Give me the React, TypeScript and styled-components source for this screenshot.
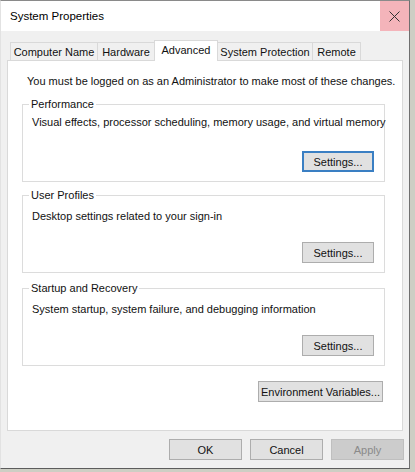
import React from "react";
import styled, { createGlobalStyle, css } from "styled-components";

const GlobalStyle = createGlobalStyle`
  html, body { margin: 0; padding: 0; background: #cfd0c8; }
  body {
    font-family: "Liberation Sans", Arial, sans-serif;
    font-size: 11px;
    color: #111;
  }
  * { box-sizing: border-box; }
`;

const Screen = styled.div`
  width: 415px;
  height: 472px;
  background: #cdcec4;
  overflow: hidden;
`;

const Window = styled.div`
  width: 410px;
  height: 469px;
  background: #f0f0f0;
  border-top: 1px solid #8a8a8a;
  border-right: 1px solid #6f6f6f;
  border-bottom: 1px solid #5c5c5c;
  border-left: 1px solid #e2e2e2;
  display: flex;
  flex-direction: column;
`;

const TitleBar = styled.div`
  height: 30px;
  background: #ffffff;
  display: flex;
  align-items: center;
  justify-content: space-between;
  padding-left: 9px;
`;

const Title = styled.span`
  font-size: 11.5px;
  line-height: 14px;
  color: #000;
`;

const CloseButton = styled.div`
  width: 29px;
  height: 30px;
  background: #f4b4ba;
  display: flex;
  align-items: center;
  justify-content: center;
`;

const Body = styled.div`
  flex: 1;
  display: flex;
  flex-direction: column;
  padding: 8px 6px 0 6px;
`;

const TabStrip = styled.div`
  height: 21px;
  display: flex;
  align-items: flex-end;
  padding-left: 4px;
`;

const Tab = styled.div<{ $w: number; $active?: boolean }>`
  width: ${(p) => p.$w}px;
  height: 18px;
  margin-left: -1px;
  border: 1px solid #d9d9d9;
  border-bottom: none;
  background: #f0f0f0;
  display: flex;
  align-items: center;
  justify-content: center;
  line-height: 14px;
  white-space: nowrap;
  ${(p) =>
    p.$active &&
    css`
      height: 21px;
      background: #ffffff;
      margin-bottom: -1px;
      position: relative;
      z-index: 1;
      padding-bottom: 2px;
    `}
`;

const Panel = styled.div`
  height: 371px;
  background: #ffffff;
  border: 1px solid #d9d9d9;
  padding: 0 17px 0 14px;
  display: flex;
  flex-direction: column;
`;

const Notice = styled.div`
  margin-top: 13px;
  padding-left: 5px;
  line-height: 14px;
  white-space: nowrap;
`;

const Group = styled.fieldset<{ $mt: number }>`
  margin: ${(p) => p.$mt}px 0 0 0;
  padding: 0 10px 9px 9px;
  border: 1px solid #dcdcdc;
  min-width: 0;
  display: flex;
  flex-direction: column;
`;

const Legend = styled.legend`
  padding: 0 2px;
  margin-left: -3px;
  line-height: 14px;
  white-space: nowrap;
`;

const Desc = styled.div<{ $mt: number }>`
  margin-top: ${(p) => p.$mt}px;
  line-height: 14px;
  white-space: nowrap;
`;

const ButtonRow = styled.div<{ $mt: number; $mr?: number }>`
  display: flex;
  justify-content: flex-end;
  gap: 8px;
  margin-top: ${(p) => p.$mt}px;
  margin-right: ${(p) => p.$mr ?? 0}px;
`;

const Button = styled.button<{ $w?: number; $focused?: boolean; $disabled?: boolean }>`
  width: ${(p) => p.$w ?? 73}px;
  height: 21px;
  padding: 0;
  margin: 0;
  font-family: inherit;
  font-size: 11px;
  color: #111;
  background: #e1e1e1;
  border: 1px solid #adadad;
  display: flex;
  align-items: center;
  justify-content: center;
  line-height: 14px;
  white-space: nowrap;
  ${(p) =>
    p.$focused &&
    css`
      border: 2px solid #3a7fc3;
    `}
  ${(p) =>
    p.$disabled &&
    css`
      background: #cccccc;
      border-color: #bfbfbf;
      color: #8a8a8a;
    `}
`;

const Footer = styled.div`
  display: flex;
  justify-content: flex-end;
  gap: 8px;
  margin-top: 8px;
  margin-right: -1px;
`;

const groups = [
  {
    title: "Performance",
    desc: "Visual effects, processor scheduling, memory usage, and virtual memory",
    mt: 9,
    descMt: 4,
    focused: true,
  },
  {
    title: "User Profiles",
    desc: "Desktop settings related to your sign-in",
    mt: 6,
    descMt: 7,
  },
  {
    title: "Startup and Recovery",
    desc: "System startup, system failure, and debugging information",
    mt: 8,
    descMt: 7,
  },
];

const tabs = [
  { label: "Computer Name", w: 88 },
  { label: "Hardware", w: 58 },
  { label: "Advanced", w: 64, active: true },
  { label: "System Protection", w: 96 },
  { label: "Remote", w: 49 },
];

export default function App() {
  return (
    <>
      <GlobalStyle />
      <Screen>
        <Window>
          <TitleBar>
            <Title>System Properties</Title>
            <CloseButton>
              <svg width="11" height="11" viewBox="0 0 11 11">
                <path d="M0.5 0.5 L10.5 10.5 M10.5 0.5 L0.5 10.5" stroke="#333" strokeWidth="1" />
              </svg>
            </CloseButton>
          </TitleBar>
          <Body>
            <TabStrip>
              {tabs.map((t) => (
                <Tab key={t.label} $w={t.w} $active={t.active}>
                  {t.label}
                </Tab>
              ))}
            </TabStrip>
            <Panel>
              <Notice>You must be logged on as an Administrator to make most of these changes.</Notice>
              {groups.map((g) => (
                <Group key={g.title} $mt={g.mt}>
                  <Legend>{g.title}</Legend>
                  <Desc $mt={g.descMt}>{g.desc}</Desc>
                  <ButtonRow $mt={26 - g.descMt}>
                    <Button $w={72} $focused={g.focused}>Settings...</Button>
                  </ButtonRow>
                </Group>
              ))}
              <ButtonRow $mt={15} $mr={2}>
                <Button $w={125}>Environment Variables...</Button>
              </ButtonRow>
            </Panel>
            <Footer>
              <Button>OK</Button>
              <Button>Cancel</Button>
              <Button $disabled>Apply</Button>
            </Footer>
          </Body>
        </Window>
      </Screen>
    </>
  );
}
